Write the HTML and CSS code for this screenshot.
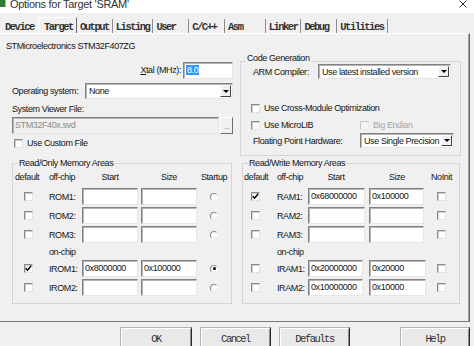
FILE: index.html
```html
<!DOCTYPE html>
<html lang="en">
<head>
    <meta charset="UTF-8">
    <title>Options for Target 'SRAM'</title>
    <link rel="stylesheet" href="styles.css">
</head>
<body>
    <div class="titlebar">
        <span class="app-icon"></span>
        <span class="title">Options for Target 'SRAM'</span>
        <svg class="close" width="8" height="8" viewBox="0 0 8 8">
            <path d="M0.5 0.5 L7.5 7.5 M7.5 0.5 L0.5 7.5" stroke="#333" stroke-width="1" fill="none"/>
        </svg>
    </div>

    <div class="tabs">
        <span class="tab first">Device</span>
        <span class="tab active">Target</span>
        <span class="tab">Output</span>
        <span class="tab">Listing</span>
        <span class="tab">User  </span>
        <span class="tab">C/C++ </span>
        <span class="tab">Asm    </span>
        <span class="tab">Linker</span>
        <span class="tab">Debug </span>
        <span class="tab">Utilities</span>
    </div>

    <div class="panel">
        <div class="top">
            <div class="left-col">
                <div class="device">STMicroelectronics STM32F407ZG</div>
                <div class="xtal-row">
                    <span class="field-label"><u>X</u>tal (MHz):</span>
                    <span class="edit xtal"><span class="selected">8.0</span></span>
                </div>
                <div class="os-row">
                    <span class="field-label os-label">Operating system:</span>
                    <span class="combo os-combo"><span class="combo-text">None</span><span class="drop"></span></span>
                </div>
                <div class="svf-label">System Viewer File:</div>
                <div class="svf-row">
                    <span class="edit disabled svf-edit">STM32F40x.svd</span>
                    <span class="browse">...</span>
                </div>
                <div class="check-row custom-row"><span class="cb"></span><span class="cb-label">Use Custom File</span></div>
            </div>

            <div class="group codegen">
                <span class="group-title">Code Generation</span>
                <div class="field-row arm-row">
                    <span class="field-label arm-label">ARM Compiler:</span>
                    <span class="combo arm-combo"><span class="combo-text">Use latest installed version</span><span class="drop"></span></span>
                </div>
                <div class="check-row cross-row"><span class="cb"></span><span class="cb-label">Use Cross-Module Optimization</span></div>
                <div class="check-row micro-row">
                    <span class="check-item micro"><span class="cb"></span><span class="cb-label">Use MicroLIB</span></span>
                    <span class="check-item off"><span class="cb"></span><span class="cb-label">Big Endian</span></span>
                </div>
                <div class="field-row fph-row">
                    <span class="field-label fph-label">Floating Point Hardware:</span>
                    <span class="combo fph-combo"><span class="combo-text">Use Single Precision</span><span class="drop"></span></span>
                </div>
            </div>
        </div>

        <div class="memory">
            <div class="group mem ro">
                <span class="group-title">Read/Only Memory Areas</span>
                <div class="mem-grid">
                    <span class="hd">default</span>
                    <span class="hd">off-chip</span>
                    <span class="hd mid">Start</span>
                    <span class="hd mid">Size</span>
                    <span class="hd mid last">Startup</span>

                    <span class="cell-cb"><span class="cb"></span></span>
                    <span class="row-label">ROM1:</span>
                    <span class="edit"></span>
                    <span class="edit"></span>
                    <span class="cell-end"><span class="radio"></span></span>

                    <span class="cell-cb"><span class="cb"></span></span>
                    <span class="row-label">ROM2:</span>
                    <span class="edit"></span>
                    <span class="edit"></span>
                    <span class="cell-end"><span class="radio"></span></span>

                    <span class="cell-cb"><span class="cb"></span></span>
                    <span class="row-label">ROM3:</span>
                    <span class="edit"></span>
                    <span class="edit"></span>
                    <span class="cell-end"><span class="radio"></span></span>

                    <span class="onchip">on-chip</span>

                    <span class="cell-cb"><span class="cb checked"><svg width="7" height="7" viewBox="0 0 7 7"><path d="M0.8 3.2 L2.6 5.2 L6.2 0.8" fill="none" stroke="#000" stroke-width="1.5"/></svg></span></span>
                    <span class="row-label">IROM1:</span>
                    <span class="edit">0x8000000</span>
                    <span class="edit">0x100000</span>
                    <span class="cell-end"><span class="radio on"></span></span>

                    <span class="cell-cb"><span class="cb"></span></span>
                    <span class="row-label">IROM2:</span>
                    <span class="edit"></span>
                    <span class="edit"></span>
                    <span class="cell-end"><span class="radio"></span></span>
                </div>
            </div>

            <div class="group mem rw">
                <span class="group-title">Read/Write Memory Areas</span>
                <div class="mem-grid">
                    <span class="hd">default</span>
                    <span class="hd">off-chip</span>
                    <span class="hd mid">Start</span>
                    <span class="hd mid">Size</span>
                    <span class="hd mid last">NoInit</span>

                    <span class="cell-cb"><span class="cb checked"><svg width="7" height="7" viewBox="0 0 7 7"><path d="M0.8 3.2 L2.6 5.2 L6.2 0.8" fill="none" stroke="#000" stroke-width="1.5"/></svg></span></span>
                    <span class="row-label">RAM1:</span>
                    <span class="edit">0x68000000</span>
                    <span class="edit">0x100000</span>
                    <span class="cell-end"><span class="cb"></span></span>

                    <span class="cell-cb"><span class="cb"></span></span>
                    <span class="row-label">RAM2:</span>
                    <span class="edit"></span>
                    <span class="edit"></span>
                    <span class="cell-end"><span class="cb"></span></span>

                    <span class="cell-cb"><span class="cb"></span></span>
                    <span class="row-label">RAM3:</span>
                    <span class="edit"></span>
                    <span class="edit"></span>
                    <span class="cell-end"><span class="cb"></span></span>

                    <span class="onchip">on-chip</span>

                    <span class="cell-cb"><span class="cb"></span></span>
                    <span class="row-label">IRAM1:</span>
                    <span class="edit">0x20000000</span>
                    <span class="edit">0x20000</span>
                    <span class="cell-end"><span class="cb"></span></span>

                    <span class="cell-cb"><span class="cb"></span></span>
                    <span class="row-label">IRAM2:</span>
                    <span class="edit">0x10000000</span>
                    <span class="edit">0x10000</span>
                    <span class="cell-end"><span class="cb"></span></span>
                </div>
            </div>
        </div>
    </div>

    <div class="buttons">
        <button class="btn">OK</button>
        <button class="btn">Cancel</button>
        <button class="btn">Defaults</button>
        <button class="btn help">Help</button>
    </div>
</body>
</html>
```

FILE: styles.css
```css
* {
    box-sizing: border-box;
}
body {
    margin: 0;
    width: 474px;
    height: 346px;
    overflow: hidden;
    background: #f0f0f0;
    font-family: "Liberation Sans", Arial, sans-serif;
    font-size: 9px;
    letter-spacing: -0.4px;
    color: #151515;
}

/* window title (cut at the top) */
.titlebar {
    height: 13px;
    background: #fff;
    display: flex;
    align-items: flex-start;
    padding-right: 7px;
}
.app-icon {
    width: 6px;
    height: 7px;
    background: #2f7d32;
    border-right: 1px solid #9ccc65;
}
.title {
    margin: -1px 0 0 4px;
    font-size: 11px;
    line-height: 11px;
    letter-spacing: -0.3px;
    color: #333;
}
.close {
    margin-left: auto;
}

/* tab strip */
.tabs {
    height: 20px;
    display: flex;
    align-items: flex-end;
    font-family: "Liberation Mono", monospace;
    font-size: 10.5px;
    font-weight: bold;
    letter-spacing: -1.5px;
    color: #333;
}
.tab {
    height: 14px;
    line-height: 13px;
    padding: 2px 3px 0 3px;
    white-space: pre;
    border-right: 1px solid #8c8c8c;
}
.tab.first {
    width: 38px;
    padding-left: 5px;
    border-right: none;
}
.tab.active {
    width: 39px;
    height: 16px;
    padding: 3px 0 0 5px;
    border-left: 1px solid #fff;
    border-top: 1px solid #fff;
    border-right: 1px solid #696969;
}

/* tab page */
.panel {
    width: 470px;
    height: 289px;
    border-top: 1px solid #fff;
    border-right: 1px solid #696969;
    border-bottom: 1px solid #7a7a7a;
    box-shadow: inset -1px 0 0 #a0a0a0;
}
.top {
    display: flex;
    align-items: flex-start;
    padding-top: 6px;
}
.left-col {
    margin-left: 6px;
    width: 227px;
}
.device {
    line-height: 12px;
    height: 12px;
}
.xtal-row {
    margin-top: 10px;
    height: 16px;
    display: flex;
    justify-content: flex-end;
    align-items: center;
}
.xtal-row .field-label {
    margin-right: 2px;
}
.xtal {
    width: 50px;
    height: 16px;
}
.selected {
    background: #3399ff;
    color: #fff;
    padding: 0 1px;
}
.os-row {
    margin-top: 5px;
    height: 16px;
    padding-left: 6px;
    display: flex;
    align-items: center;
}
.os-label {
    width: 73px;
}
.os-combo {
    width: 148px;
}
.svf-label {
    margin-top: 4px;
    line-height: 12px;
    padding-left: 6px;
}
.svf-row {
    margin-top: 2px;
    height: 17px;
    padding-left: 6px;
    display: flex;
    gap: 1px;
}
.svf-edit {
    width: 207px;
}
.browse {
    width: 13px;
    height: 17px;
    background: #f0f0f0;
    border: 1px solid;
    border-color: #fff #6d6d6d #6d6d6d #fff;
    font-size: 7px;
    line-height: 17px;
    text-align: center;
    color: #777;
}
.custom-row {
    margin-top: 3px;
    padding-left: 8px;
}

/* shared controls */
.field-label {
    line-height: 12px;
    white-space: nowrap;
}
.edit {
    display: block;
    height: 17px;
    background: #fff;
    border: 1px solid;
    border-color: #828282 #e6e6e6 #e6e6e6 #828282;
    box-shadow: inset 1px 1px 0 #b4b4b4;
    padding: 1px 0 0 2px;
    line-height: 12px;
    white-space: nowrap;
    overflow: hidden;
}
.edit.disabled {
    background: #f0f0f0;
    color: #8a8a8a;
}
.combo {
    display: flex;
    height: 16px;
    background: #fff;
    border: 1px solid;
    border-color: #828282 #e6e6e6 #e6e6e6 #828282;
    box-shadow: inset 1px 1px 0 #b4b4b4;
}
.combo-text {
    flex: 1;
    padding-left: 3px;
    line-height: 14px;
    white-space: nowrap;
    overflow: hidden;
}
.drop {
    width: 11px;
    margin: 1px;
    background: #f0f0f0;
    border: 1px solid;
    border-color: #fff #404040 #404040 #fff;
    display: flex;
    align-items: center;
    justify-content: center;
}
.drop::after {
    content: "";
    border-left: 3px solid transparent;
    border-right: 3px solid transparent;
    border-top: 3px solid #000;
}
.check-row {
    height: 12px;
    display: flex;
    align-items: center;
}
.check-item {
    display: flex;
    align-items: center;
}
.cb {
    width: 9px;
    height: 9px;
    flex: none;
    background: #fff;
    border: 1px solid;
    border-color: #8a8a8a #e2e2e2 #e2e2e2 #8a8a8a;
    box-shadow: inset 1px 1px 0 #cfcfcf;
    display: flex;
    align-items: center;
    justify-content: center;
}
.cb-label {
    margin-left: 4px;
    line-height: 12px;
    white-space: nowrap;
}
.check-item.off .cb {
    background: #f4f4f4;
    border-color: #c4c4c4 #ececec #ececec #c4c4c4;
    box-shadow: none;
}
.check-item.off .cb-label {
    color: #a8a8a8;
}
.radio {
    width: 8px;
    height: 8px;
    border-radius: 50%;
    background: #fff;
    border: 1px solid;
    border-color: #8a8a8a #f0f0f0 #f0f0f0 #8a8a8a;
    display: flex;
    align-items: center;
    justify-content: center;
}
.radio.on::after {
    content: "";
    width: 3px;
    height: 3px;
    border-radius: 50%;
    background: #000;
}

/* group boxes */
.group {
    position: relative;
    border: 1px solid #d5d5d5;
}
.group-title {
    position: absolute;
    top: -7px;
    left: 5px;
    padding: 0 1px;
    line-height: 12px;
    background: #f0f0f0;
    white-space: nowrap;
}
.codegen {
    margin: 21px 0 0 7px;
    width: 221px;
    height: 95px;
}
.codegen .group-title {
    top: -10px;
}
.field-row {
    display: flex;
    align-items: center;
    height: 15px;
    padding-left: 12px;
}
.arm-row {
    margin-top: 2px;
}
.arm-label {
    width: 65px;
}
.arm-combo {
    width: 133px;
    height: 15px;
}
.cross-row {
    margin-top: 23px;
    padding-left: 10px;
}
.micro-row {
    margin-top: 5px;
    padding-left: 10px;
}
.micro {
    width: 109px;
}
.fph-row {
    margin-top: 2px;
}
.fph-label {
    width: 107px;
}
.fph-combo {
    width: 94px;
    height: 15px;
}

/* memory areas */
.memory {
    display: flex;
    margin-top: 7px;
}
.mem {
    height: 141px;
    padding: 7px 0;
}
.ro {
    margin-left: 12px;
    width: 220px;
}
.rw {
    margin-left: 10px;
    width: 218px;
}
.mem-grid {
    display: grid;
    grid-template-rows: 15px 17px 17px 17px 13px 17px 17px;
    row-gap: 2px;
}
.ro .mem-grid {
    grid-template-columns: 36px 33px 59px 56px 1fr;
}
.rw .mem-grid {
    grid-template-columns: 34px 31px 61px 55px 1fr;
}
.ro .edit {
    width: 56px;
}
.rw .edit {
    width: 57px;
}
.rw .mem-grid > .edit:nth-child(5n+4) {
    width: 55px;
}
.hd {
    line-height: 12px;
    white-space: nowrap;
}
.ro .hd:first-child {
    padding-left: 2px;
}
.rw .hd:first-child {
    padding-left: 1px;
}
.hd.mid {
    width: 56px;
    text-align: center;
}
.hd.last {
    width: auto;
}
.cell-cb {
    display: flex;
    align-items: center;
}
.ro .cell-cb {
    padding-left: 11px;
}
.rw .cell-cb {
    padding-left: 8px;
}
.cell-end {
    display: flex;
    align-items: center;
    justify-content: center;
}
.row-label {
    display: flex;
    align-items: center;
}
.onchip {
    grid-column: 2 / 6;
    line-height: 12px;
    align-self: end;
}

/* dialog buttons */
.buttons {
    display: flex;
    gap: 8px;
    margin-top: 5px;
    padding-left: 120px;
}
.btn {
    width: 71px;
    height: 23px;
    padding: 0;
    background: #e9e9e9;
    border: 1px solid;
    border-color: #b4b4b4 #2b2b2b #2b2b2b #b4b4b4;
    box-shadow: inset 1px 1px 0 #fff, inset -1px -1px 0 #8a8a8a;
    font-family: "Liberation Mono", monospace;
    font-size: 10.5px;
    letter-spacing: -1.5px;
    line-height: 14px;
    color: #333;
    text-align: center;
}
.btn:first-child {
    width: 72px;
}
.help {
    width: 70px;
    margin-left: 42px;
}
```
